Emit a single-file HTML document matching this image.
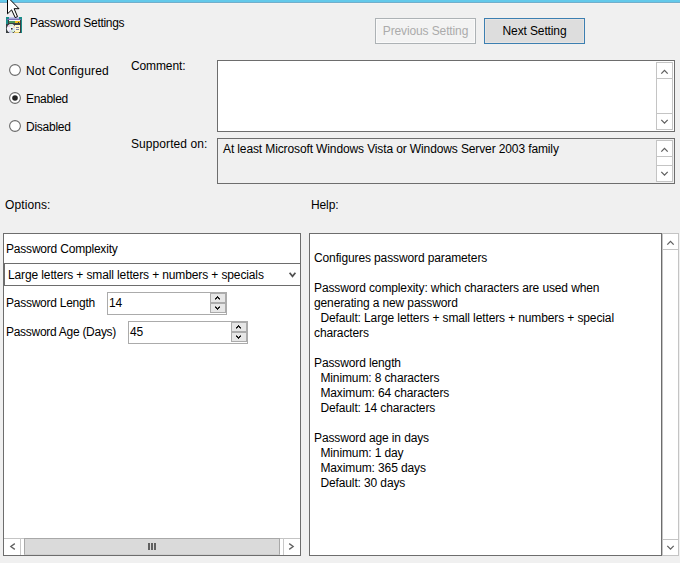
<!DOCTYPE html>
<html><head><meta charset="utf-8">
<style>
*{box-sizing:border-box;margin:0;padding:0}
html,body{width:680px;height:563px;overflow:hidden;background:#f0f0f0}
body{position:relative;font-family:"Liberation Sans",sans-serif;font-size:12px;color:#000;line-height:15px}
div{position:absolute}
.t{white-space:pre;letter-spacing:-0.12px}
.bx{border:1px solid #6d6d6d;background:#fff}
.sbb{border:1px solid #c4c4c4;background:#fff}
svg{position:absolute;overflow:visible}
</style></head><body>
<!-- top blue bar -->
<div style="left:0;top:0;width:680px;height:2px;background:#63c9ea"></div>
<div style="left:0;top:2px;width:680px;height:1px;background:#72aecb"></div>
<div style="left:0;top:3px;width:680px;height:1px;background:#f6f3f1"></div>

<!-- icon 16x16 at 6,17 -->
<svg style="left:6px;top:17px" width="16" height="16" viewBox="0 0 16 16">
  <g shape-rendering="crispEdges">
  <rect x="0" y="0" width="16" height="16" fill="#3a3f42"/>
  <rect x="0" y="0" width="3" height="2" fill="#1a8c88"/>
  <rect x="0" y="2" width="2" height="5" fill="#1a8c88"/>
  <rect x="13" y="0" width="3" height="2" fill="#1a8c88"/>
  <rect x="15" y="2" width="1" height="14" fill="#1a8c88"/>
  <rect x="3" y="0" width="10" height="1" fill="#c4c4ee"/>
  <rect x="3" y="1" width="10" height="1" fill="#a4a4d6"/>
  <rect x="1" y="2" width="14" height="1" fill="#7a70b6"/>
  <rect x="3" y="3" width="11" height="1" fill="#f6f6ff"/>
  <rect x="3" y="4" width="6" height="2" fill="#4a9458"/>
  <rect x="9" y="4" width="5" height="2" fill="#f0c020"/>
  <rect x="12" y="5" width="1" height="1" fill="#303030"/>
  <rect x="9" y="8" width="5" height="7" fill="#fff6cc"/>
  <rect x="10" y="10" width="3" height="1" fill="#7c80a8"/>
  <rect x="10" y="12" width="3" height="1" fill="#7c80a8"/>
  <rect x="8" y="15" width="5" height="1" fill="#e8d070"/>
  </g>
  <circle cx="5.2" cy="11.5" r="4.4" fill="#f4f4f8"/>
  <rect x="2" y="8" width="2" height="2" fill="#f2c4e4" opacity="0.9"/>
  <rect x="3.5" y="7.2" width="3" height="2" fill="#cfeecf"/>
  <rect x="7" y="9" width="2" height="2" fill="#f6dcc8"/>
  <rect x="7" y="11.5" width="2" height="2" fill="#c8e8f4"/>
  <rect x="3" y="13.5" width="3" height="2" fill="#cfcff4"/>
  <rect x="5.5" y="13.5" width="2" height="1.5" fill="#c8f0c0"/>
  <rect x="5" y="11" width="1.6" height="1.6" fill="#333"/>
</svg>
<div class="t" style="left:30px;top:16px;letter-spacing:-0.3px">Password Settings</div>

<!-- buttons -->
<div style="left:375px;top:18px;width:101px;height:26px;border:1px solid #adb2b5;background:#f3f3f3;box-shadow:inset 0 0 0 1px #fafafa"></div>
<div class="t" style="left:375px;top:24px;width:101px;text-align:center;color:#ababab">Previous Setting</div>
<div style="left:484px;top:18px;width:101px;height:26px;border:1px solid #3c7fb1;background:#dddddd;box-shadow:inset 0 0 0 1px #e8e4e2"></div>
<div class="t" style="left:484px;top:24px;width:101px;text-align:center">Next Setting</div>

<!-- radios -->
<svg style="left:8px;top:63px" width="14" height="14"><circle cx="7" cy="7" r="5.4" fill="#fff" stroke="#6a6a6a" stroke-width="1.1"/></svg>
<div class="t" style="left:26px;top:64px;letter-spacing:0.15px">Not Configured</div>
<svg style="left:8px;top:91px" width="14" height="14"><circle cx="7" cy="7" r="5.4" fill="#fff" stroke="#6a6a6a" stroke-width="1.1"/><circle cx="7" cy="7" r="2.8" fill="#222"/></svg>
<div class="t" style="left:26px;top:92px;letter-spacing:-0.3px">Enabled</div>
<svg style="left:8px;top:119px" width="14" height="14"><circle cx="7" cy="7" r="5.4" fill="#fff" stroke="#6a6a6a" stroke-width="1.1"/></svg>
<div class="t" style="left:26px;top:120px;letter-spacing:-0.25px">Disabled</div>

<div class="t" style="left:131px;top:59px">Comment:</div>
<div class="t" style="left:131px;top:137px;letter-spacing:0.08px">Supported on:</div>

<!-- comment box -->
<div class="bx" style="left:217px;top:60px;width:458px;height:72px"></div>
<div class="sbb" style="left:656px;top:78px;width:17px;height:36px;border-top:0;border-bottom:0"></div>
<div class="sbb" style="left:656px;top:62px;width:17px;height:17px"></div>
<div class="sbb" style="left:656px;top:113px;width:17px;height:17px"></div>
<svg style="left:656px;top:62px" width="17" height="17"><polyline points="5.3,11.6 8.5,8.4 11.7,11.6" fill="none" stroke="#606060" stroke-width="1.3"/></svg>
<svg style="left:656px;top:113px" width="17" height="17"><polyline points="5.3,6.9 8.5,10.1 11.7,6.9" fill="none" stroke="#606060" stroke-width="1.3"/></svg>

<!-- supported box -->
<div class="bx" style="left:217px;top:138px;width:458px;height:46px;background:#f0f0f0"></div>
<div class="sbb" style="left:656px;top:156px;width:17px;height:10px;border-top:0;border-bottom:0"></div>
<div class="sbb" style="left:656px;top:140px;width:17px;height:17px"></div>
<div class="sbb" style="left:656px;top:165px;width:17px;height:17px"></div>
<svg style="left:656px;top:140px" width="17" height="17"><polyline points="5.3,11.6 8.5,8.4 11.7,11.6" fill="none" stroke="#606060" stroke-width="1.3"/></svg>
<svg style="left:656px;top:165px" width="17" height="17"><polyline points="5.3,6.9 8.5,10.1 11.7,6.9" fill="none" stroke="#606060" stroke-width="1.3"/></svg>
<div class="t" style="left:223px;top:142px">At least Microsoft Windows Vista or Windows Server 2003 family</div>

<div class="t" style="left:5px;top:198px;letter-spacing:0.1px">Options:</div>
<div class="t" style="left:311px;top:198px">Help:</div>

<!-- options panel -->
<div class="bx" style="left:3px;top:233px;width:298px;height:323px"></div>
<div class="t" style="left:6px;top:242px;letter-spacing:-0.2px">Password Complexity</div>
<div style="left:4px;top:263px;width:297px;height:23px;border:1px solid #6d6d6d;background:#fff"></div>
<div class="t" style="left:8px;top:268px">Large letters + small letters + numbers + specials</div>
<svg style="left:284px;top:262px" width="20" height="20"><polyline points="5.6,10.7 8.5,14.3 11.4,10.7" fill="none" stroke="#505050" stroke-width="1.7"/></svg>

<div class="t" style="left:6px;top:296px;letter-spacing:-0.25px">Password Length</div>
<div style="left:107px;top:292px;width:120px;height:23px;border:1px solid #ababab;background:#fff"></div>
<div class="t" style="left:109px;top:296px">14</div>
<div style="left:210px;top:293px;width:16px;height:20px;border:1px solid #ababab;background:#ababab"></div>
<div style="left:211px;top:294px;width:14px;height:8px;background:#e6e6e6"></div>
<div style="left:211px;top:304px;width:14px;height:8px;background:#e6e6e6"></div>
<svg style="left:210px;top:293px" width="16" height="20"><g shape-rendering="crispEdges" fill="#1a1a1a"><rect x="7" y="3" width="1" height="1"/><rect x="6" y="4" width="3" height="1"/><rect x="5" y="5" width="2" height="1"/><rect x="8" y="5" width="2" height="1"/><rect x="5" y="6" width="1" height="1" fill="#606060"/><rect x="9" y="6" width="1" height="1" fill="#606060"/><rect x="5" y="13" width="1" height="1" fill="#606060"/><rect x="9" y="13" width="1" height="1" fill="#606060"/><rect x="5" y="14" width="2" height="1"/><rect x="8" y="14" width="2" height="1"/><rect x="6" y="15" width="3" height="1"/><rect x="7" y="16" width="1" height="1"/></g></svg>

<div class="t" style="left:6px;top:325px;letter-spacing:-0.28px">Password Age (Days)</div>
<div style="left:128px;top:321px;width:120px;height:23px;border:1px solid #ababab;background:#fff"></div>
<div class="t" style="left:130px;top:325px">45</div>
<div style="left:231px;top:322px;width:16px;height:20px;border:1px solid #ababab;background:#ababab"></div>
<div style="left:232px;top:323px;width:14px;height:8px;background:#e6e6e6"></div>
<div style="left:232px;top:333px;width:14px;height:8px;background:#e6e6e6"></div>
<svg style="left:231px;top:322px" width="16" height="20"><g shape-rendering="crispEdges" fill="#1a1a1a"><rect x="7" y="3" width="1" height="1"/><rect x="6" y="4" width="3" height="1"/><rect x="5" y="5" width="2" height="1"/><rect x="8" y="5" width="2" height="1"/><rect x="5" y="6" width="1" height="1" fill="#606060"/><rect x="9" y="6" width="1" height="1" fill="#606060"/><rect x="5" y="13" width="1" height="1" fill="#606060"/><rect x="9" y="13" width="1" height="1" fill="#606060"/><rect x="5" y="14" width="2" height="1"/><rect x="8" y="14" width="2" height="1"/><rect x="6" y="15" width="3" height="1"/><rect x="7" y="16" width="1" height="1"/></g></svg>

<!-- horizontal scrollbar -->
<div style="left:4px;top:538px;width:296px;height:17px;background:#fff;border-top:1px solid #c4c4c4"></div>
<div style="left:20px;top:538px;width:1px;height:17px;background:#c8c8c8"></div>
<div style="left:283px;top:538px;width:1px;height:17px;background:#c8c8c8"></div>
<div style="left:24px;top:538px;width:256px;height:17px;background:#dadada;border:1px solid #a8a8a8;border-bottom-color:#d0d0d0"></div>
<div style="left:148px;top:543px;width:2px;height:7px;background:#606060"></div>
<div style="left:151px;top:543px;width:2px;height:7px;background:#606060"></div>
<div style="left:154px;top:543px;width:2px;height:7px;background:#606060"></div>
<svg style="left:4px;top:538px" width="17" height="17"><polyline points="10.8,5.6 6.8,8.5 10.8,11.4" fill="none" stroke="#606060" stroke-width="1.3"/></svg>
<svg style="left:283px;top:538px" width="17" height="17"><polyline points="6.2,5.6 10.2,8.5 6.2,11.4" fill="none" stroke="#606060" stroke-width="1.3"/></svg>

<!-- help panel -->
<div class="bx" style="left:309px;top:233px;width:353px;height:323px"></div>
<div class="sbb" style="left:662px;top:233px;width:17px;height:323px"></div>
<div style="left:662px;top:249px;width:17px;height:1px;background:#c4c4c4"></div>
<div style="left:662px;top:539px;width:17px;height:1px;background:#c4c4c4"></div>
<svg style="left:662px;top:233px" width="17" height="17"><polyline points="5.3,11.6 8.5,8.4 11.7,11.6" fill="none" stroke="#606060" stroke-width="1.3"/></svg>
<svg style="left:662px;top:539px" width="17" height="17"><polyline points="5.3,6.9 8.5,10.1 11.7,6.9" fill="none" stroke="#606060" stroke-width="1.3"/></svg>
<div class="t" style="left:314px;top:251px">Configures password parameters

Password complexity: which characters are used when
generating a new password
  Default: Large letters + small letters + numbers + special
characters

Password length
  Minimum: 8 characters
  Maximum: 64 characters
  Default: 14 characters

Password age in days
  Minimum: 1 day
  Maximum: 365 days
  Default: 30 days</div>

<!-- cursor -->
<svg style="left:0;top:0" width="24" height="24"><polygon points="7.5,-3 7.5,13.8 11.6,9.9 15.2,17.6 17.5,16.6 14.1,8.7 19,8.7" fill="#fff" stroke="#000" stroke-width="1" stroke-linejoin="miter"/></svg>
</body></html>
